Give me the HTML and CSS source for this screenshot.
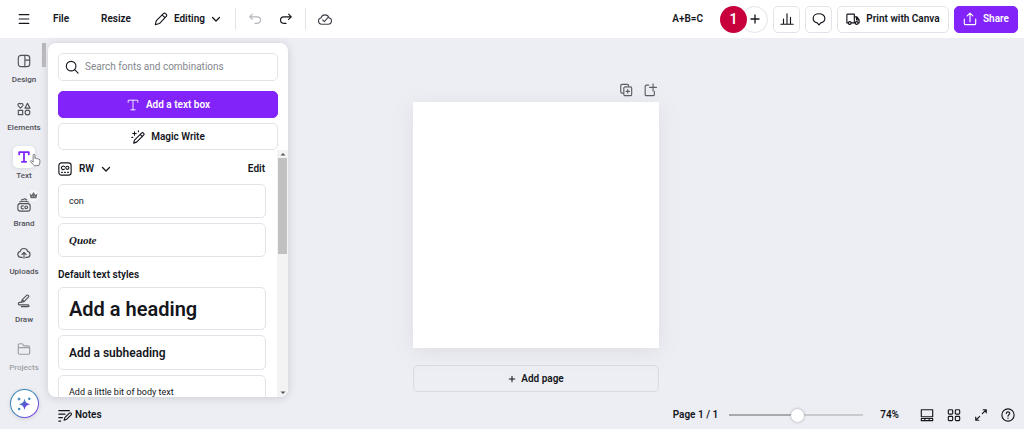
FILE: index.html
```html
<!DOCTYPE html>
<html lang="en">
<head>
  <meta charset="UTF-8" />
  <meta name="viewport" content="width=device-width, initial-scale=1.0"/>
  <title>Canva Editor</title>
  <link rel="stylesheet" href="styles.css">
</head>
<body>
  <header class="topbar">
    <button class="plain menu" aria-label="Main menu">
      <svg class="icon" viewBox="0 0 16 16"><path d="M2.500 3h11M2.500 8h11M2.500 13h11"/></svg>
    </button>
    <button class="plain file">File</button>
    <button class="plain resize">Resize</button>
    <button class="plain mode">
      <svg class="icon" viewBox="0 0 16 16"><path d="M1.500 14.500l1.200-4.700 8-8a1.700 1.700 0 0 1 2.500 0l.8.8a1.700 1.700 0 0 1 0 2.500L6.200 13.200zM9.500 3.500l3 3"/></svg>
      <span>Editing</span>
      <svg class="chevron" viewBox="0 0 10 10"><path d="M1.500 3.500L5 7l3.500-3.500"/></svg>
    </button>
    <span class="divider"></span>
    <button class="plain undo" aria-label="Undo" disabled>
      <svg class="icon" viewBox="0 0 16 16"><path d="M5 2.500L2 5.500l3 3M2 5.500h8.500a3.700 3.700 0 0 1 0 7.500H8"/></svg>
    </button>
    <button class="plain redo" aria-label="Redo">
      <svg class="icon" viewBox="0 0 16 16"><path d="M11 2.500l3 3-3 3M14 5.500H5.500a3.700 3.700 0 0 0 0 7.500H8"/></svg>
    </button>
    <span class="divider"></span>
    <button class="plain saved" aria-label="All changes saved">
      <svg class="icon" viewBox="0 0 16 16"><path d="M4.200 14a3.700 3.700 0 0 1-.8-7.300 4.800 4.800 0 0 1 9.200 0A3.700 3.700 0 0 1 11.800 14zM5.300 9l2 2 3.900-4.500"/></svg>
    </button>

    <div class="top-right">
      <span class="doc-title">A+B=C</span>
      <div class="people">
        <button class="avatar">1</button>
        <button class="invite" aria-label="Invite people">
          <svg class="chevron" viewBox="0 0 10 10"><path d="M5 1v8M1 5h8"/></svg>
        </button>
      </div>
      <button class="btn square" aria-label="Insights">
        <svg class="icon" viewBox="0 0 16 16"><path d="M1 14h14M4 14V8M8 14V2M12 14V6"/></svg>
      </button>
      <button class="btn square" aria-label="Comments">
        <svg class="icon" viewBox="0 0 16 16"><path d="M6 12.400C3 11.800 1.300 9.700 1.300 7.200 1.300 4.200 4.200 2 8 2s6.700 2.200 6.700 5.200c0 2.500-1.700 4.600-4.700 5.200L8 14.700z"/></svg>
      </button>
      <button class="btn print">
        <svg class="icon" viewBox="0 0 16 16"><path d="M2.500 12.500H1V3.500Q1 2.500 2 2.500h7.500v10H6M9.500 5.500h3L15 9v3.500h-1M9.500 12.500h1M12 5.500V9h3"/><circle cx="4.300" cy="12.600" r="1.600"/><circle cx="12.200" cy="12.600" r="1.600"/></svg>
        <span>Print with Canva</span>
      </button>
      <button class="btn share">
        <svg class="icon" viewBox="0 0 16 16"><path d="M8 11V1.500M4.700 4.500L8 1.300l3.300 3.200M1.500 8v5q0 1.500 1.500 1.500h10q1.500 0 1.500-1.500V8"/></svg>
        <span>Share</span>
      </button>
    </div>
  </header>

  <div class="workspace">
    <nav class="sidebar">
      <div class="rail">
        <a class="nav-item" href="#design">
          <span class="nav-icon"><svg class="icon" viewBox="0 0 16 16"><rect x="1.500" y="1.500" width="13" height="13" rx="3"/><path d="M9 1.500v13M9 7h5.500"/></svg></span>
          <span>Design</span>
        </a>
        <a class="nav-item" href="#elements">
          <span class="nav-icon"><svg class="icon" viewBox="0 0 16 16"><path d="M4 7L1.500 4.300a1.500 1.500 0 0 1 2.500-2 1.500 1.500 0 0 1 2.500 2zM12 1.500L14.800 7H9.200z"/><rect x="1.500" y="9.500" width="5" height="5"/><circle cx="12" cy="12" r="2.700"/></svg></span>
          <span>Elements</span>
        </a>
        <a class="nav-item active" href="#text">
          <span class="nav-icon"><svg class="icon" viewBox="0 0 16 16"><path d="M2.500 5V2.500h11V5M8 2.500v11M5.500 13.500h5"/></svg></span>
          <span>Text</span>
          <svg class="pointer" viewBox="0 0 16 18"><path d="M5.500 10V2.700a1.200 1.200 0 0 1 2.400 0V7l1-.5 1.300 1 1.200-.5 1 1 1.500 0 .6 1.500v3.500L13 16.500H7L2 11.200q0-1.700 1.600-1.200l1.900 1.800z"/></svg>
        </a>
        <a class="nav-item" href="#brand">
          <span class="nav-icon"><svg class="icon" viewBox="0 0 16 16"><rect x="1" y="6.500" width="14" height="8.500" rx="2.500"/><path d="M3 4.500Q8 3 13 4.500M5 2.300L9 .8l2 1.500M7.200 9.200a1.700 1.700 0 1 0 0 3"/><circle cx="10.500" cy="10.700" r="1.600"/></svg></span>
          <span>Brand</span>
          <span class="crown"><svg viewBox="0 0 10 10"><path d="M.5 2.500l2.300 2L5 1l2.200 3.500 2.300-2-1.200 5.500H1.700zM3.300 6.500h.8L3.500 5zM5.900 6.500h.8L6.500 5z"/></svg></span>
        </a>
        <a class="nav-item" href="#uploads">
          <span class="nav-icon"><svg class="icon" viewBox="0 0 16 16"><path d="M6 13H4.500a3.500 3.500 0 0 1-.8-6.900 4.400 4.400 0 0 1 8.500 0A3.500 3.500 0 0 1 11.500 13H10M8 14V7.500M5.700 9.700L8 7.300l2.300 2.400"/></svg></span>
          <span>Uploads</span>
        </a>
        <a class="nav-item" href="#draw">
          <span class="nav-icon"><svg class="icon" viewBox="0 0 16 16"><path d="M5 9.500l1-3 5-5q1-.8 2 .1t.1 2L8 8.700zM6 6.500l2 2M5 9.500H3a1.500 1.500 0 0 0 0 3h10M13 12.500q2 2-1 2H5"/></svg></span>
          <span>Draw</span>
        </a>
        <a class="nav-item faded" href="#projects">
          <span class="nav-icon"><svg class="icon" viewBox="0 0 16 16"><path d="M1.500 12.500v-9Q1.500 2 3 2h3l2 2.500h4.500q2 0 2 2v6q0 1.500-1.500 1.500H3q-1.500 0-1.500-1.500zM1.500 6.500h12"/></svg></span>
          <span>Projects</span>
        </a>
        <button class="assistant" aria-label="Assistant">
          <svg viewBox="0 0 16 16">
            <defs><linearGradient id="magic" x1="0" y1="0" x2="1" y2="1"><stop offset=".3" stop-color="#3b86b8"/><stop offset="1" stop-color="#8b1cf5"/></linearGradient></defs>
            <path fill="url(#magic)" d="M8.500 2.500q.7 5 5.500 5.700-4.800.8-5.500 5.800-.7-5-5.500-5.800 4.800-.7 5.500-5.700zM3 1q.3 1.700 2 2-1.700.3-2 2-.3-1.700-2-2 1.700-.3 2-2z"/>
            <circle cx="13.300" cy="2.700" r="1.200" fill="#3b86b8"/><circle cx="3.200" cy="13" r="1.200" fill="#3b86b8"/>
          </svg>
        </button>
      </div>
      <span class="rail-thumb"></span>
    </nav>

    <section class="panel">
      <div class="panel-top">
        <label class="search">
          <svg class="icon" viewBox="0 0 16 16"><circle cx="7" cy="7" r="5.500"/><path d="M11 11l4 4"/></svg>
          <input type="text" aria-label="Search fonts" placeholder="Search fonts and combinations" />
        </label>
        <button class="btn add-text">
          <svg class="icon thin" viewBox="0 0 16 16"><path d="M2.500 5V2.500h11V5M8 2.500v11M5.500 13.500h5"/></svg>
          <span>Add a text box</span>
        </button>
        <button class="btn magic">
          <svg class="icon" viewBox="0 0 16 16"><path d="M3 15l1-3.500 8-8q1.200-1 2.300.1t.1 2.300l-8 8zM10.500 5l2.500 2.500M4 2v4M2 4h4M8.500 1v1M1 8.500h1"/></svg>
          <span>Magic Write</span>
        </button>
      </div>
      <div class="panel-scroll">
        <div class="styles-list">
          <div class="brand-row">
            <button class="plain brand-select">
              <svg class="icon" viewBox="0 0 16 16"><rect x="1" y="1" width="14" height="14" rx="3"/><path d="M7.300 5.200a2 2 0 1 0 0 3M4 11.800h1M7.500 11.800h1M11 11.800h1"/><circle cx="10.700" cy="6.700" r="1.800"/></svg>
              <span>RW</span>
              <svg class="chevron" viewBox="0 0 10 10"><path d="M1.500 3.500L5 7l3.500-3.500"/></svg>
            </button>
            <button class="plain">Edit</button>
          </div>
          <button class="style-card small">con</button>
          <button class="style-card quote">Quote</button>
          <h2>Default text styles</h2>
          <button class="style-card heading">Add a heading</button>
          <button class="style-card subheading">Add a subheading</button>
          <button class="style-card small">Add a little bit of body text</button>
        </div>
        <div class="scrollbar">
          <svg viewBox="0 0 8 8"><path d="M1.500 5.500L4 3l2.500 2.500z"/></svg>
          <span class="thumb"></span>
          <svg viewBox="0 0 8 8"><path d="M1.500 2.500L4 5l2.500-2.500z"/></svg>
        </div>
      </div>
    </section>

    <main class="stage">
      <div class="page-wrap">
        <div class="page-tools">
          <button class="plain" aria-label="Duplicate page">
            <svg class="icon" viewBox="0 0 16 16"><path d="M5 11.500H3.500Q2 11.500 2 10V3q0-1.500 1.500-1.500h6Q11 1.500 11 3M10 7.500v4M8 9.500h4"/><rect x="5.500" y="4.500" width="9" height="10" rx="1.500"/></svg>
          </button>
          <button class="plain" aria-label="Add page after">
            <svg class="icon" viewBox="0 0 16 16"><path d="M6.500 2.500H4Q2.500 2.500 2.500 4v9q0 1.500 1.500 1.500h7.500q1.500 0 1.500-1.500V9.500M11.500 1v8M7.500 5h8"/></svg>
          </button>
        </div>
        <div class="page"></div>
        <button class="add-page">
          <svg class="plus" viewBox="0 0 10 10"><path d="M5 1.500v7M1.500 5h7"/></svg>
          <span>Add page</span>
        </button>
      </div>
    </main>

    <footer class="bottombar">
      <button class="plain notes">
        <svg class="icon" viewBox="0 0 16 16"><path d="M1 3h12M1 7h7M1 11h4M7 14l1-3.200 5-5q1-.8 1.900.1t.1 1.900l-5 5zM1 15h2"/></svg>
        <span>Notes</span>
      </button>
      <div class="view-tools">
        <span>Page 1 / 1</span>
        <input class="zoom" type="range" min="0" max="100" value="51" aria-label="Zoom" />
        <button class="plain percent">74%</button>
        <button class="plain" aria-label="Thumbnails">
          <svg class="icon" viewBox="0 0 16 16"><path d="M1.500 2h13v8h-13zM1.500 12h13v2.500h-13zM5.500 12v2.500M10.500 12v2.500"/></svg>
        </button>
        <button class="plain" aria-label="Grid view">
          <svg class="icon" viewBox="0 0 16 16"><rect x="1.500" y="2" width="5" height="5" rx="1"/><rect x="9.500" y="2" width="5" height="5" rx="1"/><rect x="1.500" y="9.500" width="5" height="5" rx="1"/><rect x="9.500" y="9.500" width="5" height="5" rx="1"/></svg>
        </button>
        <button class="plain" aria-label="Full screen">
          <svg class="icon" viewBox="0 0 16 16"><path d="M10.500 2h3.500v3.500M14 2L9.500 6.500M5.500 14H2v-3.500M2 14l4.500-4.500"/></svg>
        </button>
        <button class="plain" aria-label="Help">
          <svg class="icon" viewBox="0 0 16 16"><circle cx="8" cy="8" r="7"/><path d="M6 6.300q.2-1.900 2-1.900t2 1.700q0 1-1 1.600T8 9.300M8 11.500v.3"/></svg>
        </button>
      </div>
    </footer>
  </div>
</body>
</html>
```
FILE: styles.css
```css
* {
  box-sizing: border-box;
}

body {
  margin: 0;
  height: 100vh;
  display: flex;
  flex-direction: column;
  overflow: hidden;
  background: #edeef3;
  color: #14161c;
  font-family: Roboto, "Noto Sans", sans-serif;
  font-size: 10px;
  font-weight: 600;
  line-height: 14px;
}

button, input {
  font: inherit;
  color: inherit;
}

button {
  padding: 0;
  border: none;
  cursor: pointer;
}

svg {
  display: block;
  flex: none;
}

.icon {
  width: 14px;
  height: 14px;
}

.chevron {
  width: 10px;
  height: 10px;
}

.icon, .chevron, .plus {
  fill: none;
  stroke: currentColor;
  stroke-width: 1.3;
  stroke-linecap: round;
  stroke-linejoin: round;
}

.thin {
  stroke-width: 1;
}

.plain {
  display: flex;
  align-items: center;
  background: none;
}

.btn {
  display: flex;
  align-items: center;
  justify-content: center;
  gap: 6px;
  height: 27px;
  background: #fff;
  border: 1px solid #e2e3e8;
  border-radius: 5px;
}

/* top bar */
.topbar {
  flex: none;
  display: flex;
  align-items: center;
  height: 38px;
  padding: 0 6px 0 17px;
  background: #fff;
}

.file {
  margin-left: 22px;
}

.resize {
  margin-left: 32px;
}

.mode {
  gap: 6px;
  margin: 0 14px 0 23px;
}

.divider {
  width: 1px;
  height: 22px;
  background: #e2e3e8;
}

.undo {
  margin-left: 12px;
}

.undo:disabled {
  color: #b4b5ba;
}

.redo {
  margin: 0 12px 0 17px;
}

.saved {
  margin-left: 12px;
  color: #44464d;
}

.top-right {
  display: flex;
  align-items: center;
  gap: 5px;
  margin-left: auto;
}

.doc-title {
  margin-right: 12px;
}

.people {
  display: flex;
}

.avatar {
  z-index: 1;
  width: 27px;
  height: 27px;
  border-radius: 50%;
  background: #c8003c;
  color: #fff;
  font-size: 14px;
}

.invite {
  display: flex;
  align-items: center;
  justify-content: center;
  width: 27px;
  height: 27px;
  margin-left: -6px;
  background: #fff;
  border: 1px solid #e2e3e8;
  border-radius: 50%;
}

.square {
  width: 27px;
}

.print {
  width: 112px;
}

.share {
  width: 64px;
  background: #8224f9;
  border-color: #8224f9;
  color: #fff;
}

/* workspace */
.workspace {
  flex: 1;
  min-height: 0;
  display: grid;
  grid-template-columns: 48px 240px 1fr;
  grid-template-rows: minmax(0, 1fr) 32px;
}

.sidebar {
  grid-row: 1 / -1;
  display: flex;
  padding-top: 5px;
}

.rail {
  flex: 1;
  display: flex;
  flex-direction: column;
  align-items: center;
  padding-top: 7px;
}

.nav-item {
  position: relative;
  flex: none;
  display: flex;
  flex-direction: column;
  align-items: center;
  width: 48px;
  height: 48px;
  color: #50525a;
  font-size: 8px;
  font-weight: 500;
  line-height: 16px;
  text-decoration: none;
}

.nav-icon {
  display: flex;
  align-items: center;
  justify-content: center;
  width: 22px;
  height: 22px;
  border-radius: 5px;
}

.active .nav-icon {
  background: #fff;
  color: #8224f9;
  box-shadow: 0 1px 4px #d5d6dd;
}

.active .icon {
  stroke-width: 2;
}

.faded {
  color: #9d9fa6;
}

.pointer {
  position: absolute;
  top: 7px;
  left: 29px;
  width: 12px;
  height: 14px;
  fill: #fff;
  stroke: #55575e;
}

.crown {
  position: absolute;
  top: -4px;
  right: 9px;
  padding: 1px;
  border-radius: 50%;
  background: #f8f8fa;
}

.crown svg {
  width: 9px;
  height: 9px;
  fill: #6b6d75;
}

.assistant {
  flex: none;
  display: flex;
  align-items: center;
  justify-content: center;
  width: 29px;
  height: 29px;
  margin-top: 3px;
  border: 1px solid transparent;
  border-radius: 50%;
  background: linear-gradient(#fff, #fff) padding-box, linear-gradient(135deg, #3b86b8 50%, #8b1cf5) border-box;
  box-shadow: 0 1px 4px #cfd0d8;
}

.assistant svg {
  width: 16px;
  height: 16px;
}

.rail-thumb {
  width: 4px;
  height: 24px;
  margin: 0 2px 0 -6px;
  background: #b5b5b8;
}

/* text panel */
.panel {
  z-index: 1;
  grid-area: 1 / 2;
  display: flex;
  flex-direction: column;
  min-height: 0;
  margin-top: 5px;
  overflow: hidden;
  background: #fff;
  border-radius: 8px;
  box-shadow: 0 1px 8px #c9cad3;
}

.panel-top {
  display: flex;
  flex-direction: column;
  gap: 5px;
  padding: 10px 10px 0;
}

.search {
  display: flex;
  align-items: center;
  gap: 6px;
  height: 28px;
  margin-bottom: 5px;
  padding: 0 6px;
  border: 1px solid #e2e3e8;
  border-radius: 5px;
}

.search input {
  flex: 1;
  min-width: 0;
  padding: 0;
  border: none;
  outline: none;
  background: none;
  font-weight: 400;
}

.search input::placeholder {
  color: #85878e;
}

.add-text {
  background: #8224f9;
  border-color: #8224f9;
  color: #fff;
}

.panel-scroll {
  flex: 1;
  display: flex;
  min-height: 0;
}

.styles-list {
  flex: 1;
  display: flex;
  flex-direction: column;
  gap: 5px;
  padding: 8px 11px 0 10px;
  overflow: hidden;
}

.brand-row {
  flex: none;
  display: flex;
  align-items: center;
  justify-content: space-between;
  height: 21px;
  padding-right: 1px;
}

.brand-select {
  gap: 7px;
}

.style-card {
  flex: none;
  height: 34px;
  padding: 0 10px;
  background: #fff;
  border: 1px solid #e2e3e8;
  border-radius: 5px;
  text-align: left;
}

.small {
  font-size: 9px;
  font-weight: 400;
}

.quote {
  font-family: "Liberation Serif", serif;
  font-size: 11px;
  font-style: italic;
  font-weight: 700;
}

.styles-list h2 {
  margin: 6px 0 0;
  font-size: 10px;
  font-weight: 600;
  line-height: 14px;
}

.heading {
  height: 43px;
  font-size: 20px;
}

.subheading {
  height: 35px;
  font-size: 12px;
}

.scrollbar {
  display: flex;
  flex-direction: column;
  align-items: center;
  justify-content: space-between;
  width: 11px;
  background: #f3f3f4;
}

.scrollbar svg {
  width: 8px;
  height: 8px;
  fill: #55575c;
}

.thumb {
  width: 9px;
  height: 96px;
  margin-bottom: auto;
  background: #c1c1c2;
}

/* canvas */
.stage {
  grid-area: 1 / 2 / 2 / -1;
  display: flex;
  justify-content: center;
  padding-top: 44px;
}

.page-wrap {
  width: 246px;
}

.page-tools {
  display: flex;
  justify-content: flex-end;
  gap: 10px;
  height: 20px;
  padding: 0 2px 4px 0;
  color: #5c5e66;
}

.page {
  aspect-ratio: 1;
  background: #fff;
  box-shadow: 0 4px 20px #dddee5;
}

.add-page {
  display: flex;
  align-items: center;
  justify-content: center;
  gap: 5px;
  width: 100%;
  height: 27px;
  margin-top: 17px;
  background: none;
  border: 1px solid #d9dae0;
  border-radius: 5px;
}

.plus {
  width: 8px;
  height: 8px;
}

/* bottom bar */
.bottombar {
  grid-area: 2 / 2 / 3 / -1;
  display: flex;
  align-items: center;
  justify-content: space-between;
  padding: 4px 9px 0 10px;
}

.notes {
  gap: 3px;
}

.view-tools {
  display: flex;
  align-items: center;
  gap: 13px;
}

.percent {
  margin: 0 8px 0 4px;
}

.zoom {
  appearance: none;
  width: 134px;
  height: 14px;
  margin: 0 0 0 -2px;
  background: linear-gradient(90deg, #a8a9ad 50%, #c9cace 50%) center / 100% 2px no-repeat;
}

.zoom::-webkit-slider-thumb {
  appearance: none;
  width: 13px;
  height: 13px;
  border-radius: 50%;
  background: #fff;
  box-shadow: 0 0 3px #9fa0a6;
}
```
